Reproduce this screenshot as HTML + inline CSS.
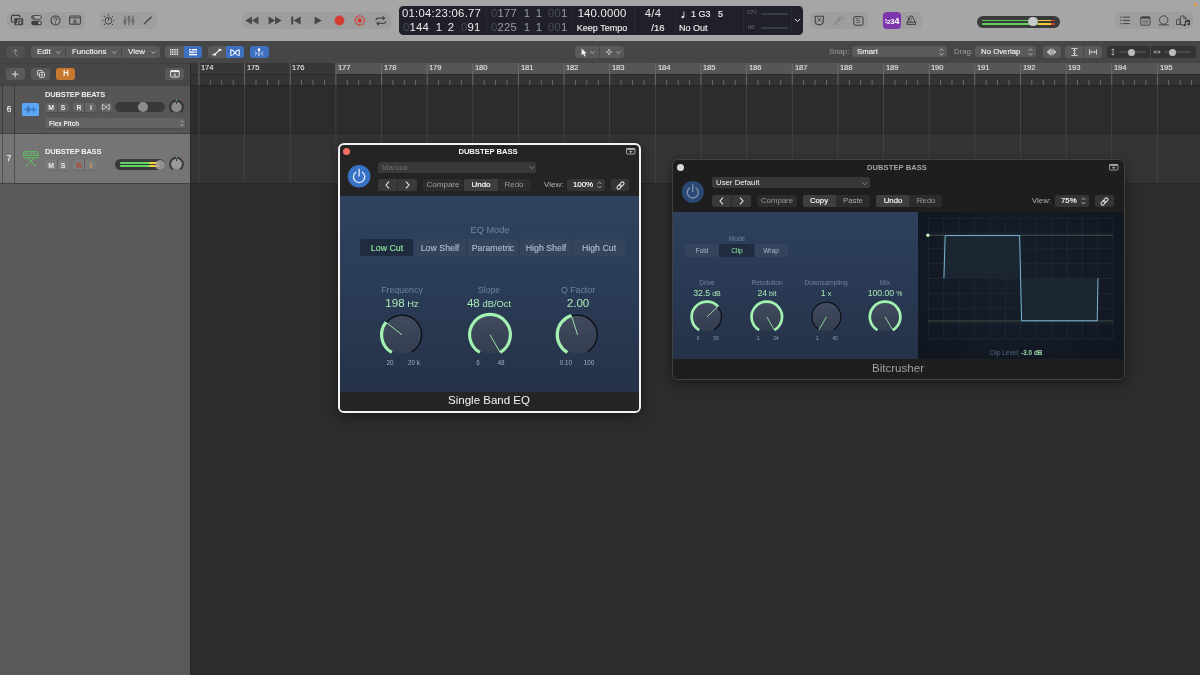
<!DOCTYPE html>
<html>
<head>
<meta charset="utf-8">
<title>Logic Pro</title>
<style>
*{box-sizing:border-box;margin:0;padding:0}
html,body{width:1200px;height:675px;overflow:hidden;background:#2b2b2b}
body{font-family:"Liberation Sans",sans-serif;color:#e6e6e6;position:relative;font-size:8px}
.a{position:absolute}
.t{position:absolute;white-space:nowrap;line-height:1;will-change:transform}
svg{position:absolute;overflow:visible}
</style>
</head>
<body>

<!-- top -->
<div class="a" style="left:0px;top:0px;width:1200px;height:41px;background:#a6a6a6;border-radius:0px;"></div>
<div class="a" style="left:7px;top:12px;width:77.5px;height:17px;background:#9e9e9e;border-radius:5px;"></div>
<div class="a" style="left:99.5px;top:12px;width:57.5px;height:17px;background:#9e9e9e;border-radius:5px;"></div>
<div class="a" style="left:241.5px;top:12px;width:149.5px;height:17px;background:#9e9e9e;border-radius:5px;"></div>
<div class="a" style="left:809.5px;top:12px;width:58px;height:17px;background:#9e9e9e;border-radius:5px;"></div>
<div class="a" style="left:882px;top:12px;width:39.5px;height:17px;background:#9e9e9e;border-radius:5px;"></div>
<div class="a" style="left:1115px;top:12px;width:78px;height:17px;background:#9e9e9e;border-radius:5px;"></div>
<svg style="left:10px;top:14px;" width="15" height="13" viewBox="0 0 15 13">
      <rect x="1.4" y="1.4" width="8.6" height="6.6" rx="1.3" fill="none" stroke="#3e3e3e" stroke-width="1.1"/>
      <rect x="4" y="4" width="9.4" height="7.4" rx="1.4" fill="#3e3e3e" stroke="#9e9e9e" stroke-width="0.6"/>
      <path d="M7.8 9.6 L7.8 6.3 L10.9 5.7 L10.9 9" fill="none" stroke="#b5b5b5" stroke-width="0.8"/>
      <circle cx="7.1" cy="9.6" r="0.9" fill="#b5b5b5"/><circle cx="10.2" cy="9" r="0.9" fill="#b5b5b5"/>
    </svg>
<svg style="left:31px;top:15px;" width="11" height="11" viewBox="0 0 11 11">
      <rect x="0.6" y="0.6" width="9.8" height="3.6" rx="1.8" fill="#b4b4b4" stroke="#3e3e3e" stroke-width="1"/>
      <circle cx="2.4" cy="2.4" r="1.1" fill="#3e3e3e"/>
      <rect x="0.2" y="5.8" width="10.6" height="4.4" rx="2.2" fill="#3e3e3e"/>
      <circle cx="8.5" cy="8" r="1.15" fill="#c4c4c4"/>
    </svg>
<svg style="left:50px;top:15px;" width="11" height="11" viewBox="0 0 11 11">
      <circle cx="5.5" cy="5.4" r="4.5" fill="none" stroke="#3e3e3e" stroke-width="1.05"/>
      <path d="M4 4.3 Q4 2.8 5.5 2.8 Q7 2.8 7 4.1 Q7 4.9 6.2 5.3 Q5.5 5.7 5.5 6.5" fill="none" stroke="#3e3e3e" stroke-width="1"/>
      <circle cx="5.5" cy="7.9" r="0.65" fill="#3e3e3e"/>
    </svg>
<svg style="left:69px;top:15px;" width="12" height="10" viewBox="0 0 12 10">
      <rect x="0.6" y="0.9" width="10.8" height="8.4" rx="1.2" fill="none" stroke="#3e3e3e" stroke-width="1.05"/>
      <rect x="0.8" y="1.1" width="10.4" height="1.5" fill="#707070"/>
      <path d="M0.6 2.8 L11.4 2.8" stroke="#3e3e3e" stroke-width="0.7"/>
      <path d="M6 3.8 L6 7 M4.5 5.7 L6 7.1 L7.5 5.7" fill="none" stroke="#3e3e3e" stroke-width="0.9"/>
      <path d="M3.6 8 L8.4 8" stroke="#3e3e3e" stroke-width="0.9"/>
    </svg>
<svg style="left:102px;top:14px;" width="13" height="13" viewBox="0 0 13 13">
      <circle cx="6.5" cy="6.7" r="3.4" fill="none" stroke="#3e3e3e" stroke-width="0.9"/>
      <path d="M6.5 6.7 L6.5 4" stroke="#3e3e3e" stroke-width="0.9"/><circle cx="6.50" cy="0.90" r="0.6" fill="#3e3e3e"/><circle cx="10.46" cy="2.54" r="0.6" fill="#3e3e3e"/><circle cx="12.10" cy="6.50" r="0.6" fill="#3e3e3e"/><circle cx="10.46" cy="10.46" r="0.6" fill="#3e3e3e"/><circle cx="2.54" cy="10.46" r="0.6" fill="#3e3e3e"/><circle cx="0.90" cy="6.50" r="0.6" fill="#3e3e3e"/><circle cx="2.54" cy="2.54" r="0.6" fill="#3e3e3e"/>
    </svg>
<svg style="left:123px;top:15px;" width="12" height="11" viewBox="0 0 12 11">
      <path d="M2 0.5 L2 10 M6 0.5 L6 10 M10 0.5 L10 10" stroke="#3e3e3e" stroke-width="0.8"/>
      <rect x="0.9" y="5.6" width="2.2" height="2.6" rx="0.6" fill="#9e9e9e" stroke="#3e3e3e" stroke-width="0.7"/>
      <rect x="4.9" y="2.4" width="2.2" height="2.6" rx="0.6" fill="#9e9e9e" stroke="#3e3e3e" stroke-width="0.7"/>
      <rect x="8.9" y="4.6" width="2.2" height="2.6" rx="0.6" fill="#9e9e9e" stroke="#3e3e3e" stroke-width="0.7"/>
    </svg>
<svg style="left:143px;top:16px;" width="10" height="9" viewBox="0 0 10 9"><path d="M1 8 L8.3 1" stroke="#3e3e3e" stroke-width="1.1" stroke-linecap="round"/></svg>
<svg style="left:245px;top:16px;" width="14" height="9" viewBox="0 0 14 9"><path d="M0.4 4.5 L6.9 0.6 L6.9 8.4 Z M6.9 4.5 L13.4 0.6 L13.4 8.4 Z" transform="translate(0,0)" fill="#484848"/></svg>
<svg style="left:267.5px;top:16px;" width="14" height="9" viewBox="0 0 14 9"><path d="M0.6 0.6 L7.1 4.5 L0.6 8.4 Z M7.1 0.6 L13.6 4.5 L7.1 8.4 Z" fill="#484848"/></svg>
<svg style="left:290.5px;top:16px;" width="10" height="9" viewBox="0 0 10 9"><path d="M0.2 0.5 L2.2 0.5 L2.2 8.5 L0.2 8.5 Z M9.6 0.5 L9.6 8.5 L2.4 4.5 Z" fill="#484848"/></svg>
<svg style="left:314px;top:16px;" width="9" height="9" viewBox="0 0 9 9"><path d="M0.6 0.4 L7.8 4.5 L0.6 8.6 Z" fill="#484848"/></svg>
<svg style="left:334px;top:15px;" width="11" height="11" viewBox="0 0 11 11"><circle cx="5.5" cy="5.5" r="4.9" fill="#d43d34"/></svg>
<svg style="left:354px;top:15px;" width="12" height="12" viewBox="0 0 12 12"><circle cx="5.7" cy="5.5" r="4.6" fill="none" stroke="#d43d34" stroke-width="1.15" stroke-dasharray="2.7 0.6"/><circle cx="5.7" cy="5.5" r="2.2" fill="#d43d34"/></svg>
<svg style="left:374.5px;top:15.5px;" width="12" height="10" viewBox="0 0 12 10">
      <path d="M1 4.3 Q1 2.2 3 2.2 L9.3 2.2 M7.6 0.4 L9.6 2.2 L7.6 4" fill="none" stroke="#484848" stroke-width="1.2"/>
      <path d="M10.6 5.3 Q10.6 7.4 8.6 7.4 L2.3 7.4 M4 5.6 L2 7.4 L4 9.2" fill="none" stroke="#484848" stroke-width="1.2"/>
    </svg>
<!-- lcd -->
<div class="a" style="left:398.5px;top:6px;width:404px;height:28.5px;background:#1f2029;border-radius:4.5px;"></div>
<div class="a" style="left:486.3px;top:8px;width:1px;height:24.5px;background:#292b34;border-radius:0px;"></div>
<div class="a" style="left:572.3px;top:8px;width:1px;height:24.5px;background:#292b34;border-radius:0px;"></div>
<div class="a" style="left:633.5px;top:8px;width:1px;height:24.5px;background:#292b34;border-radius:0px;"></div>
<div class="a" style="left:674.5px;top:8px;width:1px;height:24.5px;background:#292b34;border-radius:0px;"></div>
<div class="a" style="left:742.5px;top:8px;width:1px;height:24.5px;background:#292b34;border-radius:0px;"></div>
<div class="a" style="left:790.5px;top:8px;width:1px;height:24.5px;background:#292b34;border-radius:0px;"></div>
<div class="t" style="left:402.2px;top:13.9px;font-size:11.3px;color:#ececec;font-weight:normal;transform:translate(0,-50%);letter-spacing:0.27px;">01:04:23:06.77</div>
<div class="t" style="left:402.9px;top:27.8px;font-size:11.3px;color:#ececec;font-weight:normal;transform:translate(0,-50%);letter-spacing:0.2px;"><span style="color:#4a4c56">0</span>144</div>
<div class="t" style="left:439.2px;top:27.8px;font-size:11.3px;color:#ececec;font-weight:normal;transform:translate(-50%,-50%);">1</div>
<div class="t" style="left:451.4px;top:27.8px;font-size:11.3px;color:#ececec;font-weight:normal;transform:translate(-50%,-50%);">2</div>
<div class="t" style="left:460.6px;top:27.8px;font-size:11.3px;color:#ececec;font-weight:normal;transform:translate(0,-50%);letter-spacing:0.2px;"><span style="color:#4a4c56">0</span>91</div>
<div class="t" style="left:490.9px;top:13.9px;font-size:11.3px;color:#9a9ba3;font-weight:normal;transform:translate(0,-50%);letter-spacing:0.2px;"><span style="color:#4a4c56">0</span>177</div>
<div class="t" style="left:526.5px;top:13.9px;font-size:11.3px;color:#9a9ba3;font-weight:normal;transform:translate(-50%,-50%);">1</div>
<div class="t" style="left:538.7px;top:13.9px;font-size:11.3px;color:#9a9ba3;font-weight:normal;transform:translate(-50%,-50%);">1</div>
<div class="t" style="left:547.8px;top:13.9px;font-size:11.3px;color:#9a9ba3;font-weight:normal;transform:translate(0,-50%);letter-spacing:0.2px;"><span style="color:#4a4c56">00</span>1</div>
<div class="t" style="left:490.9px;top:27.8px;font-size:11.3px;color:#9a9ba3;font-weight:normal;transform:translate(0,-50%);letter-spacing:0.2px;"><span style="color:#4a4c56">0</span>225</div>
<div class="t" style="left:526.5px;top:27.8px;font-size:11.3px;color:#9a9ba3;font-weight:normal;transform:translate(-50%,-50%);">1</div>
<div class="t" style="left:538.7px;top:27.8px;font-size:11.3px;color:#9a9ba3;font-weight:normal;transform:translate(-50%,-50%);">1</div>
<div class="t" style="left:547.8px;top:27.8px;font-size:11.3px;color:#9a9ba3;font-weight:normal;transform:translate(0,-50%);letter-spacing:0.2px;"><span style="color:#4a4c56">00</span>1</div>
<div class="t" style="left:602.3px;top:13.9px;font-size:11.3px;color:#ececec;font-weight:normal;transform:translate(-50%,-50%);letter-spacing:0.2px;">140.0000</div>
<div class="t" style="left:602.3px;top:28.0px;font-size:9px;color:#ececec;font-weight:normal;transform:translate(-50%,-50%);-webkit-text-stroke:0.15px currentColor;">Keep Tempo</div>
<div class="t" style="left:653px;top:13.9px;font-size:11.3px;color:#ececec;font-weight:normal;transform:translate(-50%,-50%);letter-spacing:0.2px;">4/4</div>
<div class="t" style="left:657.5px;top:28.0px;font-size:9.6px;color:#ececec;font-weight:normal;transform:translate(-50%,-50%);-webkit-text-stroke:0.15px currentColor;">/16</div>
<svg style="left:680px;top:10.5px;" width="6" height="9" viewBox="0 0 6 9"><path d="M3.9 6 L3.9 0.6" stroke="#ececec" stroke-width="0.8"/><ellipse cx="2.8" cy="6" rx="1.45" ry="1.05" fill="#ececec" transform="rotate(-20 2.8 6)"/></svg>
<div class="t" style="left:690.5px;top:14.200000000000001px;font-size:9px;color:#ececec;font-weight:normal;transform:translate(0,-50%);-webkit-text-stroke:0.15px currentColor;">1 G3&nbsp;&nbsp; 5</div>
<div class="t" style="left:679px;top:28.0px;font-size:9px;color:#ececec;font-weight:normal;transform:translate(0,-50%);-webkit-text-stroke:0.15px currentColor;">No Out</div>
<div class="t" style="left:746.5px;top:13.4px;font-size:4.6px;color:#5a5c66;font-weight:bold;transform:translate(0,-50%);">CPU</div>
<div class="t" style="left:747.5px;top:27.9px;font-size:4.6px;color:#5a5c66;font-weight:bold;transform:translate(0,-50%);">HD</div>
<div class="a" style="left:760.5px;top:12.5px;width:27.5px;height:2px;background:#383a44;border-radius:1px;"></div>
<div class="a" style="left:760.5px;top:26.8px;width:27.5px;height:2px;background:#383a44;border-radius:1px;"></div>
<svg style="left:794px;top:18px;" width="7" height="5" viewBox="0 0 7 5"><path d="M0.8 0.8 L3.5 3.6 L6.2 0.8" fill="none" stroke="#ececec" stroke-width="1"/></svg>
<!-- topright -->
<svg style="left:814px;top:15px;" width="11" height="11" viewBox="0 0 11 11">
      <path d="M1.2 1.2 L9.3 1.2 L9.3 6.2 Q9.3 9.4 5.25 9.8 Q1.2 9.4 1.2 6.2 Z" fill="none" stroke="#3e3e3e" stroke-width="1.05" stroke-linejoin="round"/>
      <path d="M3.5 3.1 L7 6.6 M7 3.1 L3.5 6.6" stroke="#3e3e3e" stroke-width="0.9"/>
    </svg>
<svg style="left:833px;top:15px;" width="12" height="11" viewBox="0 0 12 11">
      <path d="M1.2 9.6 L5.4 5.6 M4.6 6.3 Q5.4 4 7.6 0.8 M5.6 5.4 Q8 4.4 10.6 2.6" fill="none" stroke="#878787" stroke-width="1.15" stroke-linecap="round"/>
    </svg>
<svg style="left:852.5px;top:15.5px;" width="11" height="10" viewBox="0 0 11 10">
      <rect x="0.8" y="0.6" width="9.2" height="8.6" rx="1.3" fill="none" stroke="#3e3e3e" stroke-width="1"/>
    </svg><div class="t" style="left:857.9px;top:20.5px;font-size:6.4px;color:#3e3e3e;font-weight:normal;transform:translate(-50%,-50%);">S</div>
<div class="a" style="left:882.5px;top:12px;width:18.5px;height:17px;background:#7b36ab;border-radius:4px;"></div>
<div class="t" style="left:891.9px;top:20.6px;transform:translate(-50%,-50%);color:#fff;font-weight:bold;letter-spacing:-0.2px"><span style="font-size:4.5px;position:relative;top:-1.2px">1</span><span style="font-size:6px;position:relative;top:-0.5px">2</span><span style="font-size:7.6px">3</span><span style="font-size:9.4px;position:relative;top:0.2px">4</span></div>
<svg style="left:906px;top:15px;" width="11" height="11" viewBox="0 0 11 11">
      <path d="M4.3 1 L6.1 1 L9.4 7.2 L9.4 9.4 L1 9.4 L1 7.2 Z M1 7.2 L9.4 7.2" fill="none" stroke="#3e3e3e" stroke-width="1" stroke-linejoin="round"/>
      <path d="M5.2 6.8 L1 1.6" stroke="#3e3e3e" stroke-width="0.9"/>
      <path d="M5.2 3 L5.2 4.6" stroke="#3e3e3e" stroke-width="0.9"/>
    </svg>
<div class="a" style="left:976.5px;top:15.6px;width:83.5px;height:12px;background:#3a3a3a;border-radius:6px;"></div>
<div class="a" style="left:981.6px;top:19.6px;width:56px;height:1.6px;background:#5fd05f;border-radius:0.8px;"></div>
<div class="a" style="left:1037.6px;top:19.6px;width:13.6px;height:1.6px;background:#f0c832;border-radius:0px;"></div>
<div class="a" style="left:1051.2px;top:19.6px;width:4.2px;height:1.6px;background:#d8402c;border-radius:0 0.8px 0.8px 0;"></div>
<div class="a" style="left:981.6px;top:23px;width:56px;height:1.6px;background:#5fd05f;border-radius:0.8px;"></div>
<div class="a" style="left:1037.6px;top:23px;width:13.6px;height:1.6px;background:#f0c832;border-radius:0px;"></div>
<div class="a" style="left:1051.2px;top:23px;width:4.2px;height:1.6px;background:#d8402c;border-radius:0 0.8px 0.8px 0;"></div>
<div class="a" style="left:1028.4px;top:16.8px;width:9.4px;height:9.4px;background:#c9cbc9;border-radius:5px;box-shadow:0 0 1px rgba(0,0,0,.5)"></div>
<svg style="left:1119.5px;top:16px;" width="11" height="9" viewBox="0 0 11 9">
      <path d="M2.8 1.2 L9.8 1.2 M2.8 4.4 L9.8 4.4 M2.8 7.6 L9.8 7.6" stroke="#3e3e3e" stroke-width="0.95"/>
      <circle cx="0.9" cy="1.2" r="0.65" fill="#3e3e3e"/><circle cx="0.9" cy="4.4" r="0.65" fill="#3e3e3e"/><circle cx="0.9" cy="7.6" r="0.65" fill="#3e3e3e"/>
    </svg>
<svg style="left:1139.5px;top:15.5px;" width="11" height="10" viewBox="0 0 11 10">
      <rect x="0.8" y="0.8" width="9.2" height="8.4" rx="1.1" fill="none" stroke="#3e3e3e" stroke-width="0.9"/>
      <rect x="0.8" y="0.8" width="9.2" height="1.8" fill="#3e3e3e"/>
      <rect x="2.6" y="4" width="5.6" height="3.6" fill="#7c7c7c"/>
    </svg>
<svg style="left:1158px;top:15px;" width="12" height="11" viewBox="0 0 12 11">
      <circle cx="5.7" cy="5" r="4.2" fill="none" stroke="#3e3e3e" stroke-width="0.9"/>
      <path d="M0.6 9.9 L10.8 9.9" stroke="#3e3e3e" stroke-width="0.9"/>
    </svg>
<svg style="left:1176px;top:14.5px;" width="15" height="12" viewBox="0 0 15 12">
      <path d="M0.5 9.6 L0.5 5.4 Q0.5 4.4 1.5 4.4 L3 4.4 Q4 4.4 4 5.4 L4 9.6" fill="none" stroke="#3e3e3e" stroke-width="0.85"/>
      <path d="M4.4 9.6 L4.4 2 Q4.4 1 5.4 1 L8 1 L10.4 3.4 L10.4 5" fill="none" stroke="#3e3e3e" stroke-width="0.85" stroke-linejoin="round"/>
      <path d="M7.8 1.2 L7.8 3.6 L10.2 3.6" fill="none" stroke="#3e3e3e" stroke-width="0.7"/>
      <path d="M0.5 9.6 L7 9.6" stroke="#3e3e3e" stroke-width="0.85"/>
      <path d="M9.3 10 L9.3 6.2 L13.4 5.2 L13.4 9" fill="none" stroke="#2e2e2e" stroke-width="1"/>
      <path d="M9.3 6.4 L13.4 5.4 L13.4 6.6 L9.3 7.6 Z" fill="#2e2e2e"/>
      <ellipse cx="8.5" cy="10.2" rx="1.3" ry="1.05" fill="#2e2e2e"/><ellipse cx="12.6" cy="9.2" rx="1.3" ry="1.05" fill="#2e2e2e"/>
    </svg>
<div class="a" style="left:1193.8px;top:3px;width:3.2px;height:3.2px;background:#f0a030;border-radius:2px;"></div>
<!-- sub -->
<div class="a" style="left:0px;top:41px;width:1200px;height:22px;background:#464646;border-radius:0px;"></div>
<div class="a" style="left:6px;top:46.3px;width:19px;height:11.7px;background:#505050;border-radius:3px;"></div>
<svg style="left:11px;top:48px;" width="9" height="9" viewBox="0 0 9 9"><path d="M4.4 1.4 L4.4 5 Q4.4 7 6.6 8.4 M1.9 3.9 L4.4 1.3 L6.9 3.9" fill="none" stroke="#909090" stroke-width="0.9"/></svg>
<div class="a" style="left:30.5px;top:46.3px;width:129.5px;height:11.7px;background:#5a5a5a;border-radius:3px;"></div>
<div class="a" style="left:65.4px;top:46.3px;width:0.7px;height:11.7px;background:#494949;border-radius:0px;"></div>
<div class="a" style="left:121px;top:46.3px;width:0.7px;height:11.7px;background:#494949;border-radius:0px;"></div>
<div class="t" style="left:36.5px;top:52.2px;font-size:7.95px;color:#f4f4f4;font-weight:normal;transform:translate(0,-50%);-webkit-text-stroke:0.12px currentColor;">Edit</div>
<svg style="left:55.9px;top:51.05px;" width="4.8" height="2.9" viewBox="0 0 4.8 2.9"><path d="M0.4 0.4 L2.4 2.5 L4.3999999999999995 0.4" fill="none" stroke="#b0b0b0" stroke-width="1.0"/></svg>
<div class="t" style="left:71.5px;top:52.2px;font-size:7.95px;color:#f4f4f4;font-weight:normal;transform:translate(0,-50%);-webkit-text-stroke:0.12px currentColor;">Functions</div>
<svg style="left:111.6px;top:51.05px;" width="4.8" height="2.9" viewBox="0 0 4.8 2.9"><path d="M0.4 0.4 L2.4 2.5 L4.3999999999999995 0.4" fill="none" stroke="#b0b0b0" stroke-width="1.0"/></svg>
<div class="t" style="left:127.8px;top:52.2px;font-size:7.95px;color:#f4f4f4;font-weight:normal;transform:translate(0,-50%);-webkit-text-stroke:0.12px currentColor;">View</div>
<svg style="left:150.9px;top:51.05px;" width="4.8" height="2.9" viewBox="0 0 4.8 2.9"><path d="M0.4 0.4 L2.4 2.5 L4.3999999999999995 0.4" fill="none" stroke="#b0b0b0" stroke-width="1.0"/></svg>
<div class="a" style="left:165.2px;top:46.3px;width:19px;height:11.7px;background:#5a5a5a;border-radius:3px 0 0 3px;"></div>
<div class="a" style="left:184.2px;top:46.3px;width:18px;height:11.7px;background:#3e70c2;border-radius:0 3px 3px 0;"></div>
<svg style="left:169.9px;top:49.3px;" width="9" height="6" viewBox="0 0 9 6"><rect x="0.00" y="0.00" width="1.2" height="1.1" fill="#f2f2f2"/><rect x="1.75" y="0.00" width="1.2" height="1.1" fill="#f2f2f2"/><rect x="3.50" y="0.00" width="1.2" height="1.1" fill="#f2f2f2"/><rect x="5.25" y="0.00" width="1.2" height="1.1" fill="#f2f2f2"/><rect x="7.00" y="0.00" width="1.2" height="1.1" fill="#f2f2f2"/><rect x="0.00" y="1.65" width="1.2" height="1.1" fill="#f2f2f2"/><rect x="1.75" y="1.65" width="1.2" height="1.1" fill="#f2f2f2"/><rect x="3.50" y="1.65" width="1.2" height="1.1" fill="#f2f2f2"/><rect x="5.25" y="1.65" width="1.2" height="1.1" fill="#f2f2f2"/><rect x="7.00" y="1.65" width="1.2" height="1.1" fill="#f2f2f2"/><rect x="0.00" y="3.30" width="1.2" height="1.1" fill="#f2f2f2"/><rect x="1.75" y="3.30" width="1.2" height="1.1" fill="#f2f2f2"/><rect x="3.50" y="3.30" width="1.2" height="1.1" fill="#f2f2f2"/><rect x="5.25" y="3.30" width="1.2" height="1.1" fill="#f2f2f2"/><rect x="7.00" y="3.30" width="1.2" height="1.1" fill="#f2f2f2"/><rect x="0.00" y="4.95" width="1.2" height="1.1" fill="#f2f2f2"/><rect x="1.75" y="4.95" width="1.2" height="1.1" fill="#f2f2f2"/><rect x="3.50" y="4.95" width="1.2" height="1.1" fill="#f2f2f2"/><rect x="5.25" y="4.95" width="1.2" height="1.1" fill="#f2f2f2"/><rect x="7.00" y="4.95" width="1.2" height="1.1" fill="#f2f2f2"/></svg>
<svg style="left:189px;top:49px;" width="8" height="7" viewBox="0 0 8 7"><rect x="0" y="0" width="2.2" height="1.4" fill="#fff"/><rect x="3" y="0" width="5" height="1.4" fill="#fff"/><rect x="0" y="2.4" width="5.6" height="1.4" fill="#fff"/><rect x="6.4" y="2.4" width="1.6" height="1.4" fill="#fff"/><rect x="0" y="4.9" width="8" height="1.4" fill="#fff"/></svg>
<div class="a" style="left:207.7px;top:46.3px;width:18.3px;height:11.7px;background:#5a5a5a;border-radius:3px 0 0 3px;"></div>
<div class="a" style="left:226px;top:46.3px;width:18.3px;height:11.7px;background:#3e70c2;border-radius:0 3px 3px 0;"></div>
<svg style="left:211.5px;top:48.2px;" width="11" height="8" viewBox="0 0 11 8"><path d="M0.4 6.6 L2.6 6.6 L7.6 1.9 L9.8 1.9" fill="none" stroke="#ececec" stroke-width="1.1"/><circle cx="2.9" cy="6.5" r="1.2" fill="#ececec"/><circle cx="7.5" cy="2" r="1.2" fill="#ececec"/></svg>
<svg style="left:230px;top:48.6px;" width="10" height="7.4" viewBox="0 0 10 7.4"><path d="M0.8 0.6 L0.8 6.8 M9.2 0.6 L9.2 6.8 M0.8 0.8 Q3 0.8 5 3.7 Q7 6.6 9.2 6.6 M0.8 6.6 Q3 6.6 5 3.7 Q7 0.8 9.2 0.8" fill="none" stroke="#fff" stroke-width="1.05"/></svg>
<div class="a" style="left:249.7px;top:46.3px;width:19.1px;height:11.7px;background:#3e70c2;border-radius:3px;"></div>
<svg style="left:254.4px;top:47.8px;" width="10" height="9" viewBox="0 0 10 9"><path d="M5 2.4 L5 8.2" stroke="#fff" stroke-width="0.9"/><circle cx="5" cy="1.7" r="1.4" fill="#fff"/><path d="M0.8 3.6 L2.8 5.4 L0.8 7.2 M9.2 3.6 L7.2 5.4 L9.2 7.2" fill="none" stroke="#fff" stroke-width="0.8"/></svg>
<div class="a" style="left:575.2px;top:46.3px;width:49px;height:11.7px;background:#5a5a5a;border-radius:3px;"></div>
<div class="a" style="left:599px;top:46.3px;width:0.7px;height:11.7px;background:#494949;border-radius:0px;"></div>
<svg style="left:580.8px;top:48px;" width="6" height="9" viewBox="0 0 6 9"><path d="M0.6 0.4 L0.6 7.2 L2.2 5.8 L3.4 8.4 L4.6 7.9 L3.4 5.4 L5.6 5.2 Z" fill="#f2f2f2"/></svg>
<svg style="left:589.9px;top:50.95px;" width="4.8" height="2.9" viewBox="0 0 4.8 2.9"><path d="M0.4 0.4 L2.4 2.5 L4.3999999999999995 0.4" fill="none" stroke="#b0b0b0" stroke-width="1.0"/></svg>
<svg style="left:606px;top:49.2px;" width="6" height="6" viewBox="0 0 6 6"><path d="M3 0 L3 6 M0 3 L6 3" stroke="#e0e0e0" stroke-width="1.2"/><rect x="2.2" y="2.2" width="1.6" height="1.6" fill="#575757"/></svg>
<svg style="left:615.7px;top:50.95px;" width="4.8" height="2.9" viewBox="0 0 4.8 2.9"><path d="M0.4 0.4 L2.4 2.5 L4.3999999999999995 0.4" fill="none" stroke="#b0b0b0" stroke-width="1.0"/></svg>
<div class="t" style="left:828.5px;top:52.2px;font-size:7.8px;color:#9c9c9c;font-weight:normal;transform:translate(0,-50%);">Snap:</div>
<div class="a" style="left:851.7px;top:46.3px;width:95px;height:11.1px;background:#5a5a5a;border-radius:3px;"></div>
<div class="t" style="left:857.4px;top:52.2px;font-size:7.8px;color:#f4f4f4;font-weight:normal;transform:translate(0,-50%);-webkit-text-stroke:0.12px currentColor;">Smart</div>
<svg style="left:938.8px;top:48.2px;" width="5" height="8" viewBox="0 0 5 8"><path d="M0.6 2.8 L2.5 0.8 L4.4 2.8 M0.6 5.2 L2.5 7.2 L4.4 5.2" fill="none" stroke="#c8c8c8" stroke-width="0.8"/></svg>
<div class="t" style="left:953.6px;top:52.2px;font-size:7.8px;color:#9c9c9c;font-weight:normal;transform:translate(0,-50%);">Drag:</div>
<div class="a" style="left:975.2px;top:46.3px;width:61px;height:11.1px;background:#5a5a5a;border-radius:3px;"></div>
<div class="t" style="left:980.9px;top:52.2px;font-size:7.8px;color:#f4f4f4;font-weight:normal;transform:translate(0,-50%);-webkit-text-stroke:0.12px currentColor;">No Overlap</div>
<svg style="left:1027.8px;top:48.2px;" width="5" height="8" viewBox="0 0 5 8"><path d="M0.6 2.8 L2.5 0.8 L4.4 2.8 M0.6 5.2 L2.5 7.2 L4.4 5.2" fill="none" stroke="#c8c8c8" stroke-width="0.8"/></svg>
<div class="a" style="left:1042.6px;top:46.3px;width:18.7px;height:11.7px;background:#5a5a5a;border-radius:3px;"></div>
<svg style="left:1047.4px;top:48.2px;" width="9" height="8" viewBox="0 0 9 8"><rect x="0.0" y="3.2" width="0.8" height="1.6" fill="#e4e4e4"/><rect x="1.15" y="2.3" width="0.8" height="3.4" fill="#e4e4e4"/><rect x="2.3" y="1.2000000000000002" width="0.8" height="5.6" fill="#e4e4e4"/><rect x="3.4499999999999997" y="0.2999999999999998" width="0.8" height="7.4" fill="#e4e4e4"/><rect x="4.6" y="1.5" width="0.8" height="5" fill="#e4e4e4"/><rect x="5.75" y="0.7000000000000002" width="0.8" height="6.6" fill="#e4e4e4"/><rect x="6.8999999999999995" y="2.2" width="0.8" height="3.6" fill="#e4e4e4"/><rect x="8.049999999999999" y="3.0" width="0.8" height="2" fill="#e4e4e4"/></svg>
<div class="a" style="left:1065.4px;top:46.3px;width:36.4px;height:11.7px;background:#5a5a5a;border-radius:3px;"></div>
<div class="a" style="left:1083.3px;top:46.3px;width:0.7px;height:11.7px;background:#494949;border-radius:0px;"></div>
<svg style="left:1070.8px;top:48.2px;" width="7" height="8" viewBox="0 0 7 8"><path d="M0.4 0.5 L6.6 0.5 M0.4 7.5 L6.6 7.5 M3.5 1.4 L3.5 6.6 M2.2 2.8 L3.5 1.5 L4.8 2.8 M2.2 5.2 L3.5 6.5 L4.8 5.2" fill="none" stroke="#e8e8e8" stroke-width="0.8"/></svg>
<svg style="left:1088.6px;top:49.4px;" width="8" height="6" viewBox="0 0 8 6"><path d="M0.5 0.2 L0.5 5.8 M7.5 0.2 L7.5 5.8 M1.6 3 L6.4 3 M2.8 1.8 L1.6 3 L2.8 4.2 M5.2 1.8 L6.4 3 L5.2 4.2" fill="none" stroke="#e8e8e8" stroke-width="0.8"/></svg>
<div class="a" style="left:1107.2px;top:46.3px;width:89px;height:11.7px;background:#333333;border-radius:3px;"></div>
<div class="a" style="left:1150px;top:46.3px;width:0.7px;height:11.7px;background:#494949;border-radius:0px;"></div>
<svg style="left:1110.9px;top:48.4px;" width="4" height="8" viewBox="0 0 4 8"><path d="M2 0.8 L2 7.2 M0.5 2.3 L2 0.8 L3.5 2.3 M0.5 5.7 L2 7.2 L3.5 5.7" fill="none" stroke="#bdbdbd" stroke-width="0.8"/></svg>
<div class="a" style="left:1119.2px;top:51.300000000000004px;width:27px;height:1.8px;background:#4a4a4a;border-radius:1px;"></div>
<div class="a" style="left:1127.8px;top:48.7px;width:7px;height:7px;background:#bcbcbc;border-radius:4px;"></div>
<svg style="left:1153px;top:50.2px;" width="8" height="4" viewBox="0 0 8 4"><path d="M0.8 2 L7.2 2 M2.3 0.5 L0.8 2 L2.3 3.5 M5.7 0.5 L7.2 2 L5.7 3.5" fill="none" stroke="#bdbdbd" stroke-width="0.8"/></svg>
<div class="a" style="left:1163.6px;top:51.300000000000004px;width:27px;height:1.8px;background:#4a4a4a;border-radius:1px;"></div>
<div class="a" style="left:1168.9px;top:48.7px;width:7px;height:7px;background:#bcbcbc;border-radius:4px;"></div>
<!-- left -->
<div class="a" style="left:0px;top:63px;width:190.4px;height:612px;background:#595959;border-radius:0px;"></div>
<div class="a" style="left:0px;top:63px;width:190.4px;height:22.4px;background:#464646;border-radius:0px;"></div>
<div class="a" style="left:0px;top:62.6px;width:1200px;height:0.8px;background:#404040;border-radius:0px;"></div>
<div class="a" style="left:5.8px;top:68px;width:19.4px;height:11.7px;background:#5a5a5a;border-radius:3px;"></div>
<svg style="left:12.2px;top:70.6px;" width="6.4" height="6.4" viewBox="0 0 6.4 6.4"><path d="M3.2 0 L3.2 6.4 M0 3.2 L6.4 3.2" stroke="#f0f0f0" stroke-width="0.85"/></svg>
<div class="a" style="left:31px;top:68px;width:19.2px;height:11.7px;background:#5a5a5a;border-radius:3px;"></div>
<svg style="left:36.8px;top:70px;" width="8" height="8" viewBox="0 0 8 8"><rect x="0.5" y="0.5" width="4.8" height="4.8" rx="0.8" fill="none" stroke="#f0f0f0" stroke-width="0.8"/><rect x="2.4" y="2.4" width="5" height="5" rx="0.8" fill="#5a5a5a" stroke="#f0f0f0" stroke-width="0.8"/><path d="M4.9 3.6 L4.9 6.2 M3.6 4.9 L6.2 4.9" stroke="#f0f0f0" stroke-width="0.7"/></svg>
<div class="a" style="left:56.2px;top:68px;width:19.3px;height:11.7px;background:#c8772f;border-radius:3px;"></div>
<div class="t" style="left:65.9px;top:73.94999999999999px;font-size:8.2px;color:#f4ecdc;font-weight:bold;transform:translate(-50%,-50%);">H</div>
<div class="a" style="left:165.2px;top:68px;width:19.1px;height:11.7px;background:#5a5a5a;border-radius:3px;"></div>
<svg style="left:170px;top:70.2px;" width="10" height="8" viewBox="0 0 10 8"><rect x="0.6" y="0.6" width="8.6" height="6.4" rx="1" fill="none" stroke="#f0f0f0" stroke-width="0.9"/><rect x="0.6" y="0.6" width="8.6" height="1.5" fill="#f0f0f0"/><path d="M4.9 2.8 L4.9 5.6 M3.6 4.5 L4.9 5.7 L6.2 4.5" fill="none" stroke="#f0f0f0" stroke-width="0.7"/></svg>
<div class="a" style="left:0px;top:85.4px;width:190.4px;height:48.4px;background:#565656;border-radius:0px;"></div>
<div class="a" style="left:0px;top:133.8px;width:190.4px;height:49px;background:#757575;border-radius:0px;"></div>
<div class="a" style="left:0px;top:85px;width:190.4px;height:0.9px;background:#414141;border-radius:0px;"></div>
<div class="a" style="left:0px;top:133.4px;width:190.4px;height:0.9px;background:#414141;border-radius:0px;"></div>
<div class="a" style="left:0px;top:182.6px;width:190.4px;height:0.9px;background:#414141;border-radius:0px;"></div>
<div class="a" style="left:2px;top:85.4px;width:0.8px;height:97.6px;background:rgba(0,0,0,.3);border-radius:0px;"></div>
<div class="a" style="left:14.4px;top:85.4px;width:0.8px;height:97.6px;background:rgba(0,0,0,.3);border-radius:0px;"></div>
<div class="t" style="left:8.8px;top:109.6px;font-size:8.2px;color:#e6e6e6;font-weight:normal;transform:translate(-50%,-50%);-webkit-text-stroke:0.25px currentColor;">6</div>
<div class="t" style="left:8.8px;top:158.6px;font-size:8.2px;color:#ececec;font-weight:normal;transform:translate(-50%,-50%);-webkit-text-stroke:0.25px currentColor;">7</div>
<div class="a" style="left:22.1px;top:103px;width:16.8px;height:13.1px;background:#5ba6f6;border-radius:1.6px;"></div>
<svg style="left:22.1px;top:103px;" width="16.8" height="13.1" viewBox="0 0 16.8 13.1"><path d="M1.6 6.5 L4.6 5.6 L5.6 3.4 L6.3 1.9 L7 3.6 L8 5.4 L10 6.1 L10.8 5.2 L11.6 3.6 L12.4 5.2 L13.4 6 L15.2 6.5 L13.4 7 L12.4 7.8 L11.6 9.4 L10.8 7.8 L10 6.9 L8 7.6 L7 9.4 L6.3 11.1 L5.6 9.6 L4.6 7.4 Z" fill="#3f78ba"/></svg>
<div class="t" style="left:44.8px;top:94.7px;font-size:7.5px;color:#ececec;font-weight:bold;transform:translate(0,-50%);letter-spacing:-0.2px;">DUBSTEP BEATS</div>
<div class="a" style="left:45.4px;top:102.6px;width:23.4px;height:9.4px;background:#656565;border-radius:2.5px;box-shadow:0 0.5px 0.6px rgba(0,0,0,.22)"></div>
<div class="a" style="left:57.2px;top:102.6px;width:0.6px;height:9.4px;background:rgba(0,0,0,.22);border-radius:0px;"></div>
<div class="t" style="left:51px;top:107.89999999999999px;font-size:6.9px;color:#ececec;font-weight:bold;transform:translate(-50%,-50%);">M</div>
<div class="t" style="left:63.2px;top:107.89999999999999px;font-size:6.9px;color:#ececec;font-weight:bold;transform:translate(-50%,-50%);">S</div>
<div class="a" style="left:72.9px;top:102.6px;width:23.4px;height:9.4px;background:#656565;border-radius:2.5px;box-shadow:0 0.5px 0.6px rgba(0,0,0,.22)"></div>
<div class="a" style="left:84.3px;top:102.6px;width:0.6px;height:9.4px;background:rgba(0,0,0,.22);border-radius:0px;"></div>
<div class="t" style="left:78.8px;top:107.89999999999999px;font-size:6.9px;color:#ececec;font-weight:bold;transform:translate(-50%,-50%);">R</div>
<div class="t" style="left:90.6px;top:107.89999999999999px;font-size:6.9px;color:#ececec;font-weight:bold;transform:translate(-50%,-50%);">I</div>
<div class="a" style="left:100.2px;top:102.6px;width:11.8px;height:9.6px;background:#656565;border-radius:2.5px;box-shadow:0 0.5px 0.6px rgba(0,0,0,.22)"></div>
<svg style="left:102.3px;top:104.4px;" width="8" height="6" viewBox="0 0 8 6"><path d="M0.5 0.3 L0.5 5.7 M7.3 0.3 L7.3 5.7 M0.5 0.6 Q2.4 0.6 3.9 3 Q5.4 5.4 7.3 5.4 M0.5 5.4 Q2.4 5.4 3.9 3 Q5.4 0.6 7.3 0.6" fill="none" stroke="#d8d8d8" stroke-width="0.8"/></svg>
<div class="a" style="left:115.4px;top:101.8px;width:49.6px;height:10.7px;background:#393939;border-radius:5.4px;"></div>
<div class="a" style="left:137.9px;top:102.2px;width:10px;height:10px;background:#8c8c8c;border-radius:5px;"></div>
<svg style="left:0;top:0" width="1" height="1"><path d="M172.77 112.32 A6.5 6.5 0 1 1 180.23 112.32" fill="none" stroke="#343434" stroke-width="1.9"/><circle cx="176.5" cy="107" r="5.1" fill="#8a8a8a"/><path d="M176.5 99.7 L176.5 101" stroke="#4ec84e" stroke-width="1"/><path d="M176.5 102 L176.5 103.8" stroke="#2e2e2e" stroke-width="1"/></svg>
<div class="a" style="left:45.4px;top:118.2px;width:140px;height:9.5px;background:#636363;border-radius:2.5px;box-shadow:0 0.5px 0.6px rgba(0,0,0,.22)"></div>
<div class="t" style="left:49.2px;top:123.5px;font-size:6.5px;color:#ececec;font-weight:bold;transform:translate(0,-50%);letter-spacing:-0.05px;">Flex Pitch</div>
<svg style="left:179.7px;top:119.8px;" width="4" height="6.4" viewBox="0 0 4 6.4"><path d="M0.5 2.2 L2 0.7 L3.5 2.2 M0.5 4.2 L2 5.7 L3.5 4.2" fill="none" stroke="#c8c8c8" stroke-width="0.7"/></svg>
<svg style="left:22.6px;top:151px;" width="16" height="16" viewBox="0 0 16 16">
      <rect x="0.7" y="0.7" width="14.4" height="6.2" rx="1.2" fill="none" stroke="#5fcb5f" stroke-width="0.9"/>
      <path d="M0.9 4.3 L14.9 4.3" stroke="#5fcb5f" stroke-width="0.9"/>
      <path d="M2.6 2.5 L5.2 2.5 M6.4 2.5 L9 2.5 M10.2 2.5 L12.8 2.5" stroke="#5fcb5f" stroke-width="0.8"/>
      <path d="M4.6 7 L11.9 14.4 M11.2 7 L3.9 14.4" stroke="#5fcb5f" stroke-width="0.9"/>
      <circle cx="3.7" cy="14.6" r="0.8" fill="#5fcb5f"/><circle cx="12.1" cy="14.6" r="0.8" fill="#5fcb5f"/>
    </svg>
<div class="t" style="left:44.8px;top:152px;font-size:7.5px;color:#f2f2f2;font-weight:bold;transform:translate(0,-50%);letter-spacing:-0.2px;">DUBSTEP BASS</div>
<div class="a" style="left:45.4px;top:160.2px;width:23.4px;height:9.4px;background:#7c7c7c;border-radius:2.5px;box-shadow:0 0.5px 0.6px rgba(0,0,0,.22)"></div>
<div class="a" style="left:57.2px;top:160.2px;width:0.6px;height:9.4px;background:rgba(0,0,0,.22);border-radius:0px;"></div>
<div class="t" style="left:51px;top:165.49999999999997px;font-size:6.9px;color:#ececec;font-weight:bold;transform:translate(-50%,-50%);">M</div>
<div class="t" style="left:63.2px;top:165.49999999999997px;font-size:6.9px;color:#ececec;font-weight:bold;transform:translate(-50%,-50%);">S</div>
<div class="a" style="left:72.9px;top:160.2px;width:23.4px;height:9.4px;background:#7c7c7c;border-radius:2.5px;box-shadow:0 0.5px 0.6px rgba(0,0,0,.22)"></div>
<div class="a" style="left:84.3px;top:160.2px;width:0.6px;height:9.4px;background:rgba(0,0,0,.22);border-radius:0px;"></div>
<div class="t" style="left:78.8px;top:165.49999999999997px;font-size:6.9px;color:#bf3b2b;font-weight:bold;transform:translate(-50%,-50%);">R</div>
<div class="t" style="left:90.6px;top:165.49999999999997px;font-size:6.9px;color:#e9a233;font-weight:bold;transform:translate(-50%,-50%);">I</div>
<div class="a" style="left:115.4px;top:159.3px;width:49.6px;height:10.7px;background:#393939;border-radius:5.4px;"></div>
<div class="a" style="left:120px;top:162.3px;width:40px;height:1.7px;background:linear-gradient(90deg,#5fd565 0,#5fd565 69%,#f2dc3c 78%,#f2c83a 90%,#f0a050 94%,#f0a050 100%);border-radius:0.8px;"></div>
<div class="a" style="left:120px;top:165.2px;width:40px;height:1.7px;background:linear-gradient(90deg,#5fd565 0,#5fd565 69%,#f2dc3c 78%,#f2c83a 90%,#f0a050 94%,#f0a050 100%);border-radius:0.8px;"></div>
<div class="a" style="left:155.3px;top:159.5px;width:10.2px;height:10.2px;background:rgba(168,168,168,.78);border-radius:5.1px;"></div>
<svg style="left:0;top:0" width="1" height="1"><path d="M172.77 169.52 A6.5 6.5 0 1 1 180.23 169.52" fill="none" stroke="#3a3a3a" stroke-width="1.9"/><circle cx="176.5" cy="164.2" r="5.1" fill="#9a9a9a"/><path d="M176.5 156.89999999999998 L176.5 158.2" stroke="#4ec84e" stroke-width="1"/><path d="M176.5 159.2 L176.5 161.0" stroke="#2e2e2e" stroke-width="1"/></svg>
<!-- arrange -->
<div class="a" style="left:190.4px;top:63px;width:1px;height:612px;background:#292929;border-radius:0px;"></div>
<div class="a" style="left:191.4px;top:85.4px;width:1008.6px;height:590px;background:#2c2c2c;border-radius:0px;"></div>
<div class="a" style="left:191.4px;top:133.8px;width:1008.6px;height:49px;background:#343434;border-radius:0px;"></div>
<div class="a" style="left:191.4px;top:133.3px;width:1008.6px;height:0.8px;background:#262626;border-radius:0px;"></div>
<div class="a" style="left:191.4px;top:182.6px;width:1008.6px;height:0.8px;background:#262626;border-radius:0px;"></div>
<div class="a" style="left:191.4px;top:63px;width:1008.6px;height:11px;background:#373737;border-radius:0px;"></div>
<div class="a" style="left:335.82000000000005px;top:63px;width:864.18px;height:11px;background:#565656;border-radius:0px;"></div>
<div class="a" style="left:191.4px;top:74px;width:1008.6px;height:11.4px;background:#343434;border-radius:0px;"></div>
<div class="a" style="left:191.4px;top:73.7px;width:1008.6px;height:0.8px;background:#2a2a2a;border-radius:0px;"></div>
<div class="a" style="left:191.4px;top:85px;width:1008.6px;height:0.8px;background:#242424;border-radius:0px;"></div>
<div class="t" style="left:201.20000000000002px;top:67.9px;font-size:7.6px;color:#e2e2e2;font-weight:normal;transform:translate(0,-50%);letter-spacing:-0.1px;-webkit-text-stroke:0.12px currentColor;">174</div>
<div class="t" style="left:246.84000000000003px;top:67.9px;font-size:7.6px;color:#e2e2e2;font-weight:normal;transform:translate(0,-50%);letter-spacing:-0.1px;-webkit-text-stroke:0.12px currentColor;">175</div>
<div class="t" style="left:292.48px;top:67.9px;font-size:7.6px;color:#e2e2e2;font-weight:normal;transform:translate(0,-50%);letter-spacing:-0.1px;-webkit-text-stroke:0.12px currentColor;">176</div>
<div class="t" style="left:338.12000000000006px;top:67.9px;font-size:7.6px;color:#e2e2e2;font-weight:normal;transform:translate(0,-50%);letter-spacing:-0.1px;-webkit-text-stroke:0.12px currentColor;">177</div>
<div class="t" style="left:383.76000000000005px;top:67.9px;font-size:7.6px;color:#e2e2e2;font-weight:normal;transform:translate(0,-50%);letter-spacing:-0.1px;-webkit-text-stroke:0.12px currentColor;">178</div>
<div class="t" style="left:429.40000000000003px;top:67.9px;font-size:7.6px;color:#e2e2e2;font-weight:normal;transform:translate(0,-50%);letter-spacing:-0.1px;-webkit-text-stroke:0.12px currentColor;">179</div>
<div class="t" style="left:475.04px;top:67.9px;font-size:7.6px;color:#e2e2e2;font-weight:normal;transform:translate(0,-50%);letter-spacing:-0.1px;-webkit-text-stroke:0.12px currentColor;">180</div>
<div class="t" style="left:520.68px;top:67.9px;font-size:7.6px;color:#e2e2e2;font-weight:normal;transform:translate(0,-50%);letter-spacing:-0.1px;-webkit-text-stroke:0.12px currentColor;">181</div>
<div class="t" style="left:566.3199999999999px;top:67.9px;font-size:7.6px;color:#e2e2e2;font-weight:normal;transform:translate(0,-50%);letter-spacing:-0.1px;-webkit-text-stroke:0.12px currentColor;">182</div>
<div class="t" style="left:611.9599999999999px;top:67.9px;font-size:7.6px;color:#e2e2e2;font-weight:normal;transform:translate(0,-50%);letter-spacing:-0.1px;-webkit-text-stroke:0.12px currentColor;">183</div>
<div class="t" style="left:657.5999999999999px;top:67.9px;font-size:7.6px;color:#e2e2e2;font-weight:normal;transform:translate(0,-50%);letter-spacing:-0.1px;-webkit-text-stroke:0.12px currentColor;">184</div>
<div class="t" style="left:703.24px;top:67.9px;font-size:7.6px;color:#e2e2e2;font-weight:normal;transform:translate(0,-50%);letter-spacing:-0.1px;-webkit-text-stroke:0.12px currentColor;">185</div>
<div class="t" style="left:748.88px;top:67.9px;font-size:7.6px;color:#e2e2e2;font-weight:normal;transform:translate(0,-50%);letter-spacing:-0.1px;-webkit-text-stroke:0.12px currentColor;">186</div>
<div class="t" style="left:794.52px;top:67.9px;font-size:7.6px;color:#e2e2e2;font-weight:normal;transform:translate(0,-50%);letter-spacing:-0.1px;-webkit-text-stroke:0.12px currentColor;">187</div>
<div class="t" style="left:840.16px;top:67.9px;font-size:7.6px;color:#e2e2e2;font-weight:normal;transform:translate(0,-50%);letter-spacing:-0.1px;-webkit-text-stroke:0.12px currentColor;">188</div>
<div class="t" style="left:885.8px;top:67.9px;font-size:7.6px;color:#e2e2e2;font-weight:normal;transform:translate(0,-50%);letter-spacing:-0.1px;-webkit-text-stroke:0.12px currentColor;">189</div>
<div class="t" style="left:931.4399999999999px;top:67.9px;font-size:7.6px;color:#e2e2e2;font-weight:normal;transform:translate(0,-50%);letter-spacing:-0.1px;-webkit-text-stroke:0.12px currentColor;">190</div>
<div class="t" style="left:977.0799999999999px;top:67.9px;font-size:7.6px;color:#e2e2e2;font-weight:normal;transform:translate(0,-50%);letter-spacing:-0.1px;-webkit-text-stroke:0.12px currentColor;">191</div>
<div class="t" style="left:1022.7199999999999px;top:67.9px;font-size:7.6px;color:#e2e2e2;font-weight:normal;transform:translate(0,-50%);letter-spacing:-0.1px;-webkit-text-stroke:0.12px currentColor;">192</div>
<div class="t" style="left:1068.36px;top:67.9px;font-size:7.6px;color:#e2e2e2;font-weight:normal;transform:translate(0,-50%);letter-spacing:-0.1px;-webkit-text-stroke:0.12px currentColor;">193</div>
<div class="t" style="left:1114.0px;top:67.9px;font-size:7.6px;color:#e2e2e2;font-weight:normal;transform:translate(0,-50%);letter-spacing:-0.1px;-webkit-text-stroke:0.12px currentColor;">194</div>
<div class="t" style="left:1159.64px;top:67.9px;font-size:7.6px;color:#e2e2e2;font-weight:normal;transform:translate(0,-50%);letter-spacing:-0.1px;-webkit-text-stroke:0.12px currentColor;">195</div>
<svg style="left:0;top:0" width="1200" height="200"><rect x="198.50" y="63" width="0.9" height="22.4" fill="#6e6e6e"/><rect x="198.50" y="85.4" width="0.9" height="97.6" fill="#444444"/><rect x="209.91" y="80" width="0.8" height="5" fill="#7a7a7a"/><rect x="221.32" y="80" width="0.8" height="5" fill="#7a7a7a"/><rect x="232.73" y="80" width="0.8" height="5" fill="#7a7a7a"/><rect x="244.14" y="63" width="0.9" height="22.4" fill="#6e6e6e"/><rect x="244.14" y="85.4" width="0.9" height="97.6" fill="#444444"/><rect x="255.55" y="80" width="0.8" height="5" fill="#7a7a7a"/><rect x="266.96" y="80" width="0.8" height="5" fill="#7a7a7a"/><rect x="278.37" y="80" width="0.8" height="5" fill="#7a7a7a"/><rect x="289.78" y="63" width="0.9" height="22.4" fill="#6e6e6e"/><rect x="289.78" y="85.4" width="0.9" height="97.6" fill="#444444"/><rect x="301.19" y="80" width="0.8" height="5" fill="#7a7a7a"/><rect x="312.60" y="80" width="0.8" height="5" fill="#7a7a7a"/><rect x="324.01" y="80" width="0.8" height="5" fill="#7a7a7a"/><rect x="335.42" y="63" width="0.9" height="22.4" fill="#6e6e6e"/><rect x="335.42" y="85.4" width="0.9" height="97.6" fill="#444444"/><rect x="346.83" y="80" width="0.8" height="5" fill="#7a7a7a"/><rect x="358.24" y="80" width="0.8" height="5" fill="#7a7a7a"/><rect x="369.65" y="80" width="0.8" height="5" fill="#7a7a7a"/><rect x="381.06" y="63" width="0.9" height="22.4" fill="#6e6e6e"/><rect x="381.06" y="85.4" width="0.9" height="97.6" fill="#444444"/><rect x="392.47" y="80" width="0.8" height="5" fill="#7a7a7a"/><rect x="403.88" y="80" width="0.8" height="5" fill="#7a7a7a"/><rect x="415.29" y="80" width="0.8" height="5" fill="#7a7a7a"/><rect x="426.70" y="63" width="0.9" height="22.4" fill="#6e6e6e"/><rect x="426.70" y="85.4" width="0.9" height="97.6" fill="#444444"/><rect x="438.11" y="80" width="0.8" height="5" fill="#7a7a7a"/><rect x="449.52" y="80" width="0.8" height="5" fill="#7a7a7a"/><rect x="460.93" y="80" width="0.8" height="5" fill="#7a7a7a"/><rect x="472.34" y="63" width="0.9" height="22.4" fill="#6e6e6e"/><rect x="472.34" y="85.4" width="0.9" height="97.6" fill="#444444"/><rect x="483.75" y="80" width="0.8" height="5" fill="#7a7a7a"/><rect x="495.16" y="80" width="0.8" height="5" fill="#7a7a7a"/><rect x="506.57" y="80" width="0.8" height="5" fill="#7a7a7a"/><rect x="517.98" y="63" width="0.9" height="22.4" fill="#6e6e6e"/><rect x="517.98" y="85.4" width="0.9" height="97.6" fill="#444444"/><rect x="529.39" y="80" width="0.8" height="5" fill="#7a7a7a"/><rect x="540.80" y="80" width="0.8" height="5" fill="#7a7a7a"/><rect x="552.21" y="80" width="0.8" height="5" fill="#7a7a7a"/><rect x="563.62" y="63" width="0.9" height="22.4" fill="#6e6e6e"/><rect x="563.62" y="85.4" width="0.9" height="97.6" fill="#444444"/><rect x="575.03" y="80" width="0.8" height="5" fill="#7a7a7a"/><rect x="586.44" y="80" width="0.8" height="5" fill="#7a7a7a"/><rect x="597.85" y="80" width="0.8" height="5" fill="#7a7a7a"/><rect x="609.26" y="63" width="0.9" height="22.4" fill="#6e6e6e"/><rect x="609.26" y="85.4" width="0.9" height="97.6" fill="#444444"/><rect x="620.67" y="80" width="0.8" height="5" fill="#7a7a7a"/><rect x="632.08" y="80" width="0.8" height="5" fill="#7a7a7a"/><rect x="643.49" y="80" width="0.8" height="5" fill="#7a7a7a"/><rect x="654.90" y="63" width="0.9" height="22.4" fill="#6e6e6e"/><rect x="654.90" y="85.4" width="0.9" height="97.6" fill="#444444"/><rect x="666.31" y="80" width="0.8" height="5" fill="#7a7a7a"/><rect x="677.72" y="80" width="0.8" height="5" fill="#7a7a7a"/><rect x="689.13" y="80" width="0.8" height="5" fill="#7a7a7a"/><rect x="700.54" y="63" width="0.9" height="22.4" fill="#6e6e6e"/><rect x="700.54" y="85.4" width="0.9" height="97.6" fill="#444444"/><rect x="711.95" y="80" width="0.8" height="5" fill="#7a7a7a"/><rect x="723.36" y="80" width="0.8" height="5" fill="#7a7a7a"/><rect x="734.77" y="80" width="0.8" height="5" fill="#7a7a7a"/><rect x="746.18" y="63" width="0.9" height="22.4" fill="#6e6e6e"/><rect x="746.18" y="85.4" width="0.9" height="97.6" fill="#444444"/><rect x="757.59" y="80" width="0.8" height="5" fill="#7a7a7a"/><rect x="769.00" y="80" width="0.8" height="5" fill="#7a7a7a"/><rect x="780.41" y="80" width="0.8" height="5" fill="#7a7a7a"/><rect x="791.82" y="63" width="0.9" height="22.4" fill="#6e6e6e"/><rect x="791.82" y="85.4" width="0.9" height="97.6" fill="#444444"/><rect x="803.23" y="80" width="0.8" height="5" fill="#7a7a7a"/><rect x="814.64" y="80" width="0.8" height="5" fill="#7a7a7a"/><rect x="826.05" y="80" width="0.8" height="5" fill="#7a7a7a"/><rect x="837.46" y="63" width="0.9" height="22.4" fill="#6e6e6e"/><rect x="837.46" y="85.4" width="0.9" height="97.6" fill="#444444"/><rect x="848.87" y="80" width="0.8" height="5" fill="#7a7a7a"/><rect x="860.28" y="80" width="0.8" height="5" fill="#7a7a7a"/><rect x="871.69" y="80" width="0.8" height="5" fill="#7a7a7a"/><rect x="883.10" y="63" width="0.9" height="22.4" fill="#6e6e6e"/><rect x="883.10" y="85.4" width="0.9" height="97.6" fill="#444444"/><rect x="894.51" y="80" width="0.8" height="5" fill="#7a7a7a"/><rect x="905.92" y="80" width="0.8" height="5" fill="#7a7a7a"/><rect x="917.33" y="80" width="0.8" height="5" fill="#7a7a7a"/><rect x="928.74" y="63" width="0.9" height="22.4" fill="#6e6e6e"/><rect x="928.74" y="85.4" width="0.9" height="97.6" fill="#444444"/><rect x="940.15" y="80" width="0.8" height="5" fill="#7a7a7a"/><rect x="951.56" y="80" width="0.8" height="5" fill="#7a7a7a"/><rect x="962.97" y="80" width="0.8" height="5" fill="#7a7a7a"/><rect x="974.38" y="63" width="0.9" height="22.4" fill="#6e6e6e"/><rect x="974.38" y="85.4" width="0.9" height="97.6" fill="#444444"/><rect x="985.79" y="80" width="0.8" height="5" fill="#7a7a7a"/><rect x="997.20" y="80" width="0.8" height="5" fill="#7a7a7a"/><rect x="1008.61" y="80" width="0.8" height="5" fill="#7a7a7a"/><rect x="1020.02" y="63" width="0.9" height="22.4" fill="#6e6e6e"/><rect x="1020.02" y="85.4" width="0.9" height="97.6" fill="#444444"/><rect x="1031.43" y="80" width="0.8" height="5" fill="#7a7a7a"/><rect x="1042.84" y="80" width="0.8" height="5" fill="#7a7a7a"/><rect x="1054.25" y="80" width="0.8" height="5" fill="#7a7a7a"/><rect x="1065.66" y="63" width="0.9" height="22.4" fill="#6e6e6e"/><rect x="1065.66" y="85.4" width="0.9" height="97.6" fill="#444444"/><rect x="1077.07" y="80" width="0.8" height="5" fill="#7a7a7a"/><rect x="1088.48" y="80" width="0.8" height="5" fill="#7a7a7a"/><rect x="1099.89" y="80" width="0.8" height="5" fill="#7a7a7a"/><rect x="1111.30" y="63" width="0.9" height="22.4" fill="#6e6e6e"/><rect x="1111.30" y="85.4" width="0.9" height="97.6" fill="#444444"/><rect x="1122.71" y="80" width="0.8" height="5" fill="#7a7a7a"/><rect x="1134.12" y="80" width="0.8" height="5" fill="#7a7a7a"/><rect x="1145.53" y="80" width="0.8" height="5" fill="#7a7a7a"/><rect x="1156.94" y="63" width="0.9" height="22.4" fill="#6e6e6e"/><rect x="1156.94" y="85.4" width="0.9" height="97.6" fill="#444444"/><rect x="1168.35" y="80" width="0.8" height="5" fill="#7a7a7a"/><rect x="1179.76" y="80" width="0.8" height="5" fill="#7a7a7a"/><rect x="1191.17" y="80" width="0.8" height="5" fill="#7a7a7a"/></svg>
<!-- eq -->
<div class="a" style="left:337.6px;top:143px;width:303.19999999999993px;height:270px;background:#242424;border-radius:6px;border:2px solid #f2f2f2;box-shadow:0 3px 12px rgba(0,0,0,.45)"></div>
<div class="a" style="left:339.6px;top:196px;width:299.19999999999993px;height:196px;background:linear-gradient(180deg,#2f425e 0%,#2b3c57 45%,#253248 100%);border-radius:0px;"></div>
<div class="a" style="left:342.8px;top:148px;width:7.4px;height:7.4px;background:#f26e62;border-radius:4px;"></div>
<div class="t" style="left:488.2px;top:152.1px;font-size:7.7px;color:#f6f6f6;font-weight:bold;transform:translate(-50%,-50%);letter-spacing:-0.08px;">DUBSTEP BASS</div>
<svg style="left:625.7px;top:148px;" width="9.4" height="6.6" viewBox="0 0 9.4 6.6"><rect x="0.5" y="0.5" width="8.4" height="5.6" rx="0.9" fill="none" stroke="#c4c4c4" stroke-width="0.8"/><rect x="0.5" y="0.5" width="8.4" height="1.3" fill="#c4c4c4"/><path d="M3 3.7 L6.4 3.7 M4.7 2.4 L4.7 5" stroke="#c4c4c4" stroke-width="0.8"/></svg>
<svg style="left:0;top:0" width="1" height="1"><circle cx="359.1" cy="176.3" r="11.3" fill="#3872c6"/><path d="M355.86 172.27 A5.65 5.65 0 1 0 362.34 172.27" fill="none" stroke="#e6eefa" stroke-width="1.3" stroke-linecap="round"/><path d="M359.1 169.05 L359.1 176.00" stroke="#e6eefa" stroke-width="1.3" stroke-linecap="round"/></svg>
<div class="a" style="left:378px;top:162px;width:158px;height:11px;background:#393939;border-radius:2.5px;"></div>
<div class="t" style="left:382px;top:167.6px;font-size:7.8px;color:#6c6c6c;font-weight:normal;transform:translate(0,-50%);">Manual</div>
<svg style="left:528.5999999999999px;top:166.20000000000002px;" width="5.4" height="3.2" viewBox="0 0 5.4 3.2"><path d="M0.4 0.4 L2.7 2.8000000000000003 L5.0 0.4" fill="none" stroke="#8a8a8a" stroke-width="0.9"/></svg>
<div class="a" style="left:378px;top:179.2px;width:39px;height:11.8px;background:#3a3a3a;border-radius:2.5px;"></div>
<div class="a" style="left:397.3px;top:179.2px;width:0.7px;height:11.8px;background:#2c2c2c;border-radius:0px;"></div>
<svg style="left:384.5px;top:181.1px;" width="5" height="8" viewBox="0 0 5 8"><path d="M4 0.6 L1 4 L4 7.4" fill="none" stroke="#e8e8e8" stroke-width="1.1"/></svg>
<svg style="left:405.1px;top:181.1px;" width="5" height="8" viewBox="0 0 5 8"><path d="M1 0.6 L4 4 L1 7.4" fill="none" stroke="#e8e8e8" stroke-width="1.1"/></svg>
<div class="a" style="left:423px;top:179.2px;width:39.8px;height:11.8px;background:#2d2d2d;border-radius:2.5px;"></div>
<div class="a" style="left:464.3px;top:179.2px;width:66.4px;height:11.8px;background:#2d2d2d;border-radius:2.5px;"></div>
<div class="a" style="left:464.3px;top:179.2px;width:33.4px;height:11.8px;background:#3e3e3e;border-radius:2.5px 0 0 2.5px;"></div>
<div class="t" style="left:442.9px;top:185.2px;font-size:8px;color:#a2a2a2;font-weight:normal;transform:translate(-50%,-50%);">Compare</div>
<div class="t" style="left:480.8px;top:185.2px;font-size:8px;color:#f6f6f6;font-weight:normal;transform:translate(-50%,-50%);-webkit-text-stroke:0.22px #f6f6f6;">Undo</div>
<div class="t" style="left:514px;top:185.2px;font-size:8px;color:#9a9a9a;font-weight:normal;transform:translate(-50%,-50%);">Redo</div>
<div class="t" style="left:544px;top:185.2px;font-size:8px;color:#b4b4b4;font-weight:normal;transform:translate(0,-50%);">View:</div>
<div class="a" style="left:567px;top:179.2px;width:38px;height:11.8px;background:#353535;border-radius:2.5px;"></div>
<div class="t" style="left:572.6px;top:185.2px;font-size:8px;color:#f6f6f6;font-weight:normal;transform:translate(0,-50%);letter-spacing:-0.1px;-webkit-text-stroke:0.22px #f6f6f6;">100%</div>
<svg style="left:596.9px;top:181.2px;" width="5.0" height="8.0" viewBox="0 0 5 8"><path d="M0.6 2.9 L2.5 1 L4.4 2.9 M0.6 5.1 L2.5 7 L4.4 5.1" fill="none" stroke="#c0c0c0" stroke-width="0.85"/></svg>
<div class="a" style="left:611px;top:179.2px;width:18px;height:11.8px;background:#353535;border-radius:2.5px;"></div>
<svg style="left:615.5px;top:180.6px;" width="9" height="9" viewBox="0 0 9 9"><g transform="rotate(-45 4.5 4.5)" fill="none" stroke="#e8e8e8" stroke-width="1"><rect x="0.2" y="2.9" width="5" height="3.2" rx="1.6"/><rect x="3.8" y="2.9" width="5" height="3.2" rx="1.6"/></g></svg>
<div class="t" style="left:489.6px;top:231.2px;font-size:9.2px;color:#72839b;font-weight:normal;transform:translate(-50%,-50%);">EQ Mode</div>
<div class="a" style="left:360.2px;top:239px;width:265px;height:16.6px;background:#34445d;border-radius:2.5px;"></div>
<div class="a" style="left:360.2px;top:239px;width:53.0px;height:16.6px;background:#1f2b3f;border-radius:2.5px 0 0 2.5px;"></div>
<div class="a" style="left:412.9px;top:239px;width:0.7px;height:16.6px;background:#2b3a52;border-radius:0px;"></div>
<div class="a" style="left:465.9px;top:239px;width:0.7px;height:16.6px;background:#2b3a52;border-radius:0px;"></div>
<div class="a" style="left:518.9000000000001px;top:239px;width:0.7px;height:16.6px;background:#2b3a52;border-radius:0px;"></div>
<div class="a" style="left:571.9000000000001px;top:239px;width:0.7px;height:16.6px;background:#2b3a52;border-radius:0px;"></div>
<div class="t" style="left:386.7px;top:247.6px;font-size:8.8px;color:#92e6a2;font-weight:normal;transform:translate(-50%,-50%);-webkit-text-stroke:0.12px currentColor;">Low Cut</div>
<div class="t" style="left:439.7px;top:247.6px;font-size:8.8px;color:#b2bece;font-weight:normal;transform:translate(-50%,-50%);-webkit-text-stroke:0.12px currentColor;">Low Shelf</div>
<div class="t" style="left:492.7px;top:247.6px;font-size:8.8px;color:#b2bece;font-weight:normal;transform:translate(-50%,-50%);-webkit-text-stroke:0.12px currentColor;">Parametric</div>
<div class="t" style="left:545.7px;top:247.6px;font-size:8.8px;color:#b2bece;font-weight:normal;transform:translate(-50%,-50%);-webkit-text-stroke:0.12px currentColor;">High Shelf</div>
<div class="t" style="left:598.7px;top:247.6px;font-size:8.8px;color:#b2bece;font-weight:normal;transform:translate(-50%,-50%);-webkit-text-stroke:0.12px currentColor;">High Cut</div>
<div class="t" style="left:402px;top:290px;font-size:8.8px;color:#71839b;font-weight:normal;transform:translate(-50%,-50%);">Frequency</div>
<div class="t" style="left:402px;top:302.6px;font-size:11.6px;color:#a8e8b6;font-weight:normal;transform:translate(-50%,-50%);">198<span style="font-size:9.4px"> Hz</span></div>
<div class="t" style="left:389.7px;top:363.2px;font-size:6.3px;color:#a2aebf;font-weight:normal;transform:translate(-50%,-50%);">20</div>
<div class="t" style="left:413.6px;top:363.2px;font-size:6.3px;color:#a2aebf;font-weight:normal;transform:translate(-50%,-50%);">20 k</div>
<div class="t" style="left:489.4px;top:290px;font-size:8.8px;color:#71839b;font-weight:normal;transform:translate(-50%,-50%);">Slope</div>
<div class="t" style="left:489.4px;top:302.6px;font-size:11.6px;color:#a8e8b6;font-weight:normal;transform:translate(-50%,-50%);">48<span style="font-size:9.4px"> dB/Oct</span></div>
<div class="t" style="left:477.5px;top:363.2px;font-size:6.3px;color:#a2aebf;font-weight:normal;transform:translate(-50%,-50%);">6</div>
<div class="t" style="left:501.2px;top:363.2px;font-size:6.3px;color:#a2aebf;font-weight:normal;transform:translate(-50%,-50%);">48</div>
<div class="t" style="left:577.5px;top:290px;font-size:8.8px;color:#71839b;font-weight:normal;transform:translate(-50%,-50%);">Q Factor</div>
<div class="t" style="left:577.5px;top:302.6px;font-size:11.6px;color:#a8e8b6;font-weight:normal;transform:translate(-50%,-50%);">2.00</div>
<div class="t" style="left:566px;top:363.2px;font-size:6.3px;color:#a2aebf;font-weight:normal;transform:translate(-50%,-50%);">0.10</div>
<div class="t" style="left:589.2px;top:363.2px;font-size:6.3px;color:#a2aebf;font-weight:normal;transform:translate(-50%,-50%);">100</div>
<svg style="left:0;top:0" width="1" height="1"><defs><linearGradient id="k1" x1="0" y1="0" x2="0" y2="1"><stop offset="0" stop-color="#414b5d"/><stop offset="1" stop-color="#333d4f"/></linearGradient></defs><circle cx="402" cy="334.8" r="19.15" fill="url(#k1)"/><path d="M392.20 351.77 A19.60 19.60 0 1 1 411.80 351.77" fill="none" stroke="#0a0d12" stroke-width="1.3"/><path d="M391.80 352.47 A20.40 20.40 0 0 1 385.92 322.24" fill="none" stroke="#a4f2b2" stroke-width="3.2"/><path d="M402.00 334.80 L385.92 322.24" stroke="#a4f2b2" stroke-width="0.9"/></svg>
<svg style="left:0;top:0" width="1" height="1"><defs><linearGradient id="k2" x1="0" y1="0" x2="0" y2="1"><stop offset="0" stop-color="#414b5d"/><stop offset="1" stop-color="#333d4f"/></linearGradient></defs><circle cx="490" cy="334.8" r="19.15" fill="url(#k2)"/><path d="M480.20 351.77 A19.60 19.60 0 1 1 499.80 351.77" fill="none" stroke="#0a0d12" stroke-width="1.3"/><path d="M479.80 352.47 A20.40 20.40 0 1 1 500.20 352.47" fill="none" stroke="#a4f2b2" stroke-width="3.2"/><path d="M490.00 334.80 L500.20 352.47" stroke="#a4f2b2" stroke-width="0.9"/></svg>
<svg style="left:0;top:0" width="1" height="1"><defs><linearGradient id="k3" x1="0" y1="0" x2="0" y2="1"><stop offset="0" stop-color="#414b5d"/><stop offset="1" stop-color="#333d4f"/></linearGradient></defs><circle cx="577.6" cy="334.8" r="19.15" fill="url(#k3)"/><path d="M567.80 351.77 A19.60 19.60 0 1 1 587.40 351.77" fill="none" stroke="#0a0d12" stroke-width="1.3"/><path d="M567.40 352.47 A20.40 20.40 0 0 1 571.30 315.40" fill="none" stroke="#a4f2b2" stroke-width="3.2"/><path d="M577.60 334.80 L571.30 315.40" stroke="#a4f2b2" stroke-width="0.9"/></svg>
<div class="a" style="left:339.6px;top:392px;width:299.19999999999993px;height:19px;background:#252525;border-radius:0 0 4px 4px;"></div>
<div class="t" style="left:489.4px;top:400.8px;font-size:11.5px;color:#f4f4f4;font-weight:normal;transform:translate(-50%,-50%);">Single Band EQ</div>
<!-- bit -->
<div class="a" style="left:672px;top:159px;width:452.5999999999999px;height:221px;background:#1e1e1e;border-radius:6px;border:1px solid #414141;box-shadow:0 3px 12px rgba(0,0,0,.4)"></div>
<div class="a" style="left:673px;top:211.6px;width:244.70000000000005px;height:147.4px;background:linear-gradient(180deg,#2e405c 0%,#2a3a55 45%,#253248 100%);border-radius:0px;"></div>
<div class="a" style="left:917.7px;top:211.6px;width:205.79999999999995px;height:147.4px;background:radial-gradient(ellipse at 50% 45%,#161f2b 0%,#131a25 60%,#0f151e 100%);border-radius:0px;"></div>
<div class="a" style="left:676.9px;top:163.7px;width:7.4px;height:7.4px;background:#dadada;border-radius:4px;"></div>
<div class="t" style="left:897px;top:167.8px;font-size:7.6px;color:#a4a4a4;font-weight:bold;transform:translate(-50%,-50%);letter-spacing:0.05px;">DUBSTEP BASS</div>
<svg style="left:1109.3px;top:164.4px;" width="9.4" height="6.6" viewBox="0 0 9.4 6.6"><rect x="0.5" y="0.5" width="8.4" height="5.6" rx="0.9" fill="none" stroke="#b8b8b8" stroke-width="0.8"/><rect x="0.5" y="0.5" width="8.4" height="1.3" fill="#b8b8b8"/><path d="M3 3.7 L6.4 3.7 M4.7 2.4 L4.7 5" stroke="#b8b8b8" stroke-width="0.8"/></svg>
<svg style="left:0;top:0" width="1" height="1"><circle cx="692.8" cy="191.9" r="11" fill="#2b4877"/><path d="M689.65 187.99 A5.50 5.50 0 1 0 695.95 187.99" fill="none" stroke="#8794a8" stroke-width="1.3" stroke-linecap="round"/><path d="M692.8 184.80 L692.8 191.60" stroke="#8794a8" stroke-width="1.3" stroke-linecap="round"/></svg>
<div class="a" style="left:712px;top:177.4px;width:157.6px;height:11px;background:#383838;border-radius:2.5px;"></div>
<div class="t" style="left:716px;top:183px;font-size:7.8px;color:#f2f2f2;font-weight:normal;transform:translate(0,-50%);">User Default</div>
<svg style="left:862.0999999999999px;top:181.6px;" width="5.4" height="3.2" viewBox="0 0 5.4 3.2"><path d="M0.4 0.4 L2.7 2.8000000000000003 L5.0 0.4" fill="none" stroke="#8a8a8a" stroke-width="0.9"/></svg>
<div class="a" style="left:712px;top:195px;width:39.2px;height:11.8px;background:#393939;border-radius:2.5px;"></div>
<div class="a" style="left:731.3px;top:195px;width:0.7px;height:11.8px;background:#2a2a2a;border-radius:0px;"></div>
<svg style="left:718.5px;top:197px;" width="5" height="8" viewBox="0 0 5 8"><path d="M4 0.6 L1 4 L4 7.4" fill="none" stroke="#e8e8e8" stroke-width="1.1"/></svg>
<svg style="left:739.1px;top:197px;" width="5" height="8" viewBox="0 0 5 8"><path d="M1 0.6 L4 4 L1 7.4" fill="none" stroke="#e8e8e8" stroke-width="1.1"/></svg>
<div class="a" style="left:757px;top:195px;width:40px;height:11.8px;background:#2c2c2c;border-radius:2.5px;"></div>
<div class="t" style="left:777px;top:201.1px;font-size:7.8px;color:#9c9c9c;font-weight:normal;transform:translate(-50%,-50%);">Compare</div>
<div class="a" style="left:803px;top:195px;width:66.6px;height:11.8px;background:#2c2c2c;border-radius:2.5px;"></div>
<div class="a" style="left:803px;top:195px;width:33.2px;height:11.8px;background:#3e3e3e;border-radius:2.5px 0 0 2.5px;"></div>
<div class="t" style="left:819.4px;top:201.1px;font-size:7.8px;color:#f6f6f6;font-weight:normal;transform:translate(-50%,-50%);-webkit-text-stroke:0.18px #f6f6f6;">Copy</div>
<div class="t" style="left:853px;top:201.1px;font-size:7.8px;color:#a8a8a8;font-weight:normal;transform:translate(-50%,-50%);">Paste</div>
<div class="a" style="left:875.7px;top:195px;width:66.6px;height:11.8px;background:#2c2c2c;border-radius:2.5px;"></div>
<div class="a" style="left:875.7px;top:195px;width:33.6px;height:11.8px;background:#3e3e3e;border-radius:2.5px 0 0 2.5px;"></div>
<div class="t" style="left:892.6px;top:201.1px;font-size:7.8px;color:#f6f6f6;font-weight:normal;transform:translate(-50%,-50%);-webkit-text-stroke:0.18px #f6f6f6;">Undo</div>
<div class="t" style="left:926px;top:201.1px;font-size:7.8px;color:#9a9a9a;font-weight:normal;transform:translate(-50%,-50%);">Redo</div>
<div class="t" style="left:1032px;top:201.1px;font-size:7.8px;color:#b4b4b4;font-weight:normal;transform:translate(0,-50%);">View:</div>
<div class="a" style="left:1054.8px;top:195px;width:34px;height:11.8px;background:#353535;border-radius:2.5px;"></div>
<div class="t" style="left:1060.6px;top:201.1px;font-size:7.8px;color:#f6f6f6;font-weight:normal;transform:translate(0,-50%);-webkit-text-stroke:0.18px #f6f6f6;">75%</div>
<svg style="left:1080.7px;top:197.0px;" width="5.0" height="8.0" viewBox="0 0 5 8"><path d="M0.6 2.9 L2.5 1 L4.4 2.9 M0.6 5.1 L2.5 7 L4.4 5.1" fill="none" stroke="#c0c0c0" stroke-width="0.85"/></svg>
<div class="a" style="left:1095px;top:195px;width:18.5px;height:11.8px;background:#353535;border-radius:2.5px;"></div>
<svg style="left:1099.7px;top:196.5px;" width="9" height="9" viewBox="0 0 9 9"><g transform="rotate(-45 4.5 4.5)" fill="none" stroke="#e8e8e8" stroke-width="1"><rect x="0.2" y="2.9" width="5" height="3.2" rx="1.6"/><rect x="3.8" y="2.9" width="5" height="3.2" rx="1.6"/></g></svg>
<div class="t" style="left:736.7px;top:238.6px;font-size:6.6px;color:#71839b;font-weight:normal;transform:translate(-50%,-50%);">Mode</div>
<div class="a" style="left:684.8px;top:244px;width:103.6px;height:12.6px;background:#34445d;border-radius:2px;"></div>
<div class="a" style="left:719.3333333333333px;top:244px;width:34.53333333333333px;height:12.6px;background:#1f2b3f;border-radius:0px;"></div>
<div class="a" style="left:753.8666666666666px;top:244px;width:0.6px;height:12.6px;background:#2b3a52;border-radius:0px;"></div>
<div class="t" style="left:702.0666666666666px;top:250.6px;font-size:6.6px;color:#aab6c6;font-weight:normal;transform:translate(-50%,-50%);">Fold</div>
<div class="t" style="left:736.5999999999999px;top:250.6px;font-size:6.6px;color:#92e6a2;font-weight:normal;transform:translate(-50%,-50%);">Clip</div>
<div class="t" style="left:771.1333333333333px;top:250.6px;font-size:6.6px;color:#aab6c6;font-weight:normal;transform:translate(-50%,-50%);">Wrap</div>
<div class="t" style="left:707px;top:283px;font-size:6.6px;color:#71839b;font-weight:normal;transform:translate(-50%,-50%);">Drive</div>
<div class="t" style="left:707px;top:292.5px;font-size:8.7px;color:#a8e8b6;font-weight:normal;transform:translate(-50%,-50%);">32.5<span style="font-size:7px"> dB</span></div>
<div class="t" style="left:698px;top:338.5px;font-size:4.8px;color:#96a4b8;font-weight:normal;transform:translate(-50%,-50%);">0</div>
<div class="t" style="left:716px;top:338.5px;font-size:4.8px;color:#96a4b8;font-weight:normal;transform:translate(-50%,-50%);">50</div>
<div class="t" style="left:766.8px;top:283px;font-size:6.6px;color:#71839b;font-weight:normal;transform:translate(-50%,-50%);">Resolution</div>
<div class="t" style="left:766.8px;top:292.5px;font-size:8.7px;color:#a8e8b6;font-weight:normal;transform:translate(-50%,-50%);">24<span style="font-size:7px"> bit</span></div>
<div class="t" style="left:757.8px;top:338.5px;font-size:4.8px;color:#96a4b8;font-weight:normal;transform:translate(-50%,-50%);">1</div>
<div class="t" style="left:775.8px;top:338.5px;font-size:4.8px;color:#96a4b8;font-weight:normal;transform:translate(-50%,-50%);">24</div>
<div class="t" style="left:826.4px;top:283px;font-size:6.6px;color:#71839b;font-weight:normal;transform:translate(-50%,-50%);">Downsampling</div>
<div class="t" style="left:826.4px;top:292.5px;font-size:8.7px;color:#a8e8b6;font-weight:normal;transform:translate(-50%,-50%);">1<span style="font-size:7px"> x</span></div>
<div class="t" style="left:817.4px;top:338.5px;font-size:4.8px;color:#96a4b8;font-weight:normal;transform:translate(-50%,-50%);">1</div>
<div class="t" style="left:835.4px;top:338.5px;font-size:4.8px;color:#96a4b8;font-weight:normal;transform:translate(-50%,-50%);">40</div>
<div class="t" style="left:885.2px;top:283px;font-size:6.6px;color:#71839b;font-weight:normal;transform:translate(-50%,-50%);">Mix</div>
<div class="t" style="left:885.2px;top:292.5px;font-size:8.7px;color:#a8e8b6;font-weight:normal;transform:translate(-50%,-50%);">100.00<span style="font-size:7px"> %</span></div>
<div class="t" style="left:876.2px;top:338.5px;font-size:4.8px;color:#96a4b8;font-weight:normal;transform:translate(-50%,-50%);"></div>
<div class="t" style="left:894.2px;top:338.5px;font-size:4.8px;color:#96a4b8;font-weight:normal;transform:translate(-50%,-50%);"></div>
<svg style="left:0;top:0" width="1" height="1"><defs><linearGradient id="b1" x1="0" y1="0" x2="0" y2="1"><stop offset="0" stop-color="#414b5d"/><stop offset="1" stop-color="#333d4f"/></linearGradient></defs><circle cx="706.9" cy="316.9" r="14.25" fill="url(#b1)"/><path d="M699.60 329.54 A14.60 14.60 0 1 1 714.20 329.54" fill="none" stroke="#0a0d12" stroke-width="1.1"/><path d="M699.27 330.11 A15.25 15.25 0 1 1 718.05 306.50" fill="none" stroke="#a4f2b2" stroke-width="2.7"/><path d="M706.90 316.90 L718.05 306.50" stroke="#a4f2b2" stroke-width="0.8"/></svg>
<svg style="left:0;top:0" width="1" height="1"><defs><linearGradient id="b2" x1="0" y1="0" x2="0" y2="1"><stop offset="0" stop-color="#414b5d"/><stop offset="1" stop-color="#333d4f"/></linearGradient></defs><circle cx="766.8" cy="316.9" r="14.25" fill="url(#b2)"/><path d="M759.50 329.54 A14.60 14.60 0 1 1 774.10 329.54" fill="none" stroke="#0a0d12" stroke-width="1.1"/><path d="M759.17 330.11 A15.25 15.25 0 1 1 774.42 330.11" fill="none" stroke="#a4f2b2" stroke-width="2.7"/><path d="M766.80 316.90 L774.42 330.11" stroke="#a4f2b2" stroke-width="0.8"/></svg>
<svg style="left:0;top:0" width="1" height="1"><defs><linearGradient id="b3" x1="0" y1="0" x2="0" y2="1"><stop offset="0" stop-color="#414b5d"/><stop offset="1" stop-color="#333d4f"/></linearGradient></defs><circle cx="826.4" cy="316.9" r="14.25" fill="url(#b3)"/><path d="M819.10 329.54 A14.60 14.60 0 1 1 833.70 329.54" fill="none" stroke="#0a0d12" stroke-width="1.1"/><path d="M826.40 316.90 L818.77 330.11" stroke="#a4f2b2" stroke-width="0.8"/></svg>
<svg style="left:0;top:0" width="1" height="1"><defs><linearGradient id="b4" x1="0" y1="0" x2="0" y2="1"><stop offset="0" stop-color="#414b5d"/><stop offset="1" stop-color="#333d4f"/></linearGradient></defs><circle cx="885.1" cy="316.9" r="14.25" fill="url(#b4)"/><path d="M877.80 329.54 A14.60 14.60 0 1 1 892.40 329.54" fill="none" stroke="#0a0d12" stroke-width="1.1"/><path d="M877.48 330.11 A15.25 15.25 0 1 1 892.73 330.11" fill="none" stroke="#a4f2b2" stroke-width="2.7"/><path d="M885.10 316.90 L892.73 330.11" stroke="#a4f2b2" stroke-width="0.8"/></svg>
<svg style="left:0;top:0" width="1200" height="400"><rect x="944" y="235.3" width="76" height="42.9" fill="#1b2531"/><rect x="1021" y="278.2" width="77" height="42.8" fill="#1b2531"/><path d="M928.30 218 L928.30 339" stroke="#232e3b" stroke-width="0.6"/><path d="M943.71 218 L943.71 339" stroke="#232e3b" stroke-width="0.6"/><path d="M959.12 218 L959.12 339" stroke="#232e3b" stroke-width="0.6"/><path d="M974.52 218 L974.52 339" stroke="#232e3b" stroke-width="0.6"/><path d="M989.93 218 L989.93 339" stroke="#232e3b" stroke-width="0.6"/><path d="M1005.34 218 L1005.34 339" stroke="#232e3b" stroke-width="0.6"/><path d="M1020.75 218 L1020.75 339" stroke="#232e3b" stroke-width="0.6"/><path d="M1036.16 218 L1036.16 339" stroke="#232e3b" stroke-width="0.6"/><path d="M1051.57 218 L1051.57 339" stroke="#232e3b" stroke-width="0.6"/><path d="M1066.97 218 L1066.97 339" stroke="#232e3b" stroke-width="0.6"/><path d="M1082.38 218 L1082.38 339" stroke="#232e3b" stroke-width="0.6"/><path d="M1097.79 218 L1097.79 339" stroke="#232e3b" stroke-width="0.6"/><path d="M1113.20 218 L1113.20 339" stroke="#232e3b" stroke-width="0.6"/><path d="M928.3 218.00 L1113.2 218.00" stroke="#232e3b" stroke-width="0.6"/><path d="M928.3 233.12 L1113.2 233.12" stroke="#232e3b" stroke-width="0.6"/><path d="M928.3 248.25 L1113.2 248.25" stroke="#232e3b" stroke-width="0.6"/><path d="M928.3 263.38 L1113.2 263.38" stroke="#232e3b" stroke-width="0.6"/><path d="M928.3 278.50 L1113.2 278.50" stroke="#232e3b" stroke-width="0.6"/><path d="M928.3 293.62 L1113.2 293.62" stroke="#232e3b" stroke-width="0.6"/><path d="M928.3 308.75 L1113.2 308.75" stroke="#232e3b" stroke-width="0.6"/><path d="M928.3 323.88 L1113.2 323.88" stroke="#232e3b" stroke-width="0.6"/><path d="M928.3 339.00 L1113.2 339.00" stroke="#232e3b" stroke-width="0.6"/><path d="M928.3 235.3 L1113.2 235.3 M928.3 321 L1113.2 321" stroke="#4f6d58" stroke-width="0.7"/><circle cx="927.9" cy="235.3" r="1.7" fill="#c4f4c0"/><path d="M943.9 278.2 L945.2 235.6 L1019.6 235.6 L1021.6 320.8 L1097.2 320.8 L1098 278.2" fill="none" stroke="#79b4d6" stroke-width="1" stroke-linejoin="round"/></svg>
<div class="t" style="left:1016.2px;top:352.6px;transform:translate(-50%,-50%);font-size:6.4px;color:#596675">Clip Level: <span style="color:#a6dca8;font-weight:bold">-3.0 dB</span></div>
<div class="a" style="left:673px;top:359px;width:450.5999999999999px;height:20px;background:#1e1e1e;border-radius:0 0 5px 5px;"></div>
<div class="t" style="left:898px;top:367.9px;font-size:11.6px;color:#a0a0a0;font-weight:normal;transform:translate(-50%,-50%);">Bitcrusher</div>
</body>
</html>
